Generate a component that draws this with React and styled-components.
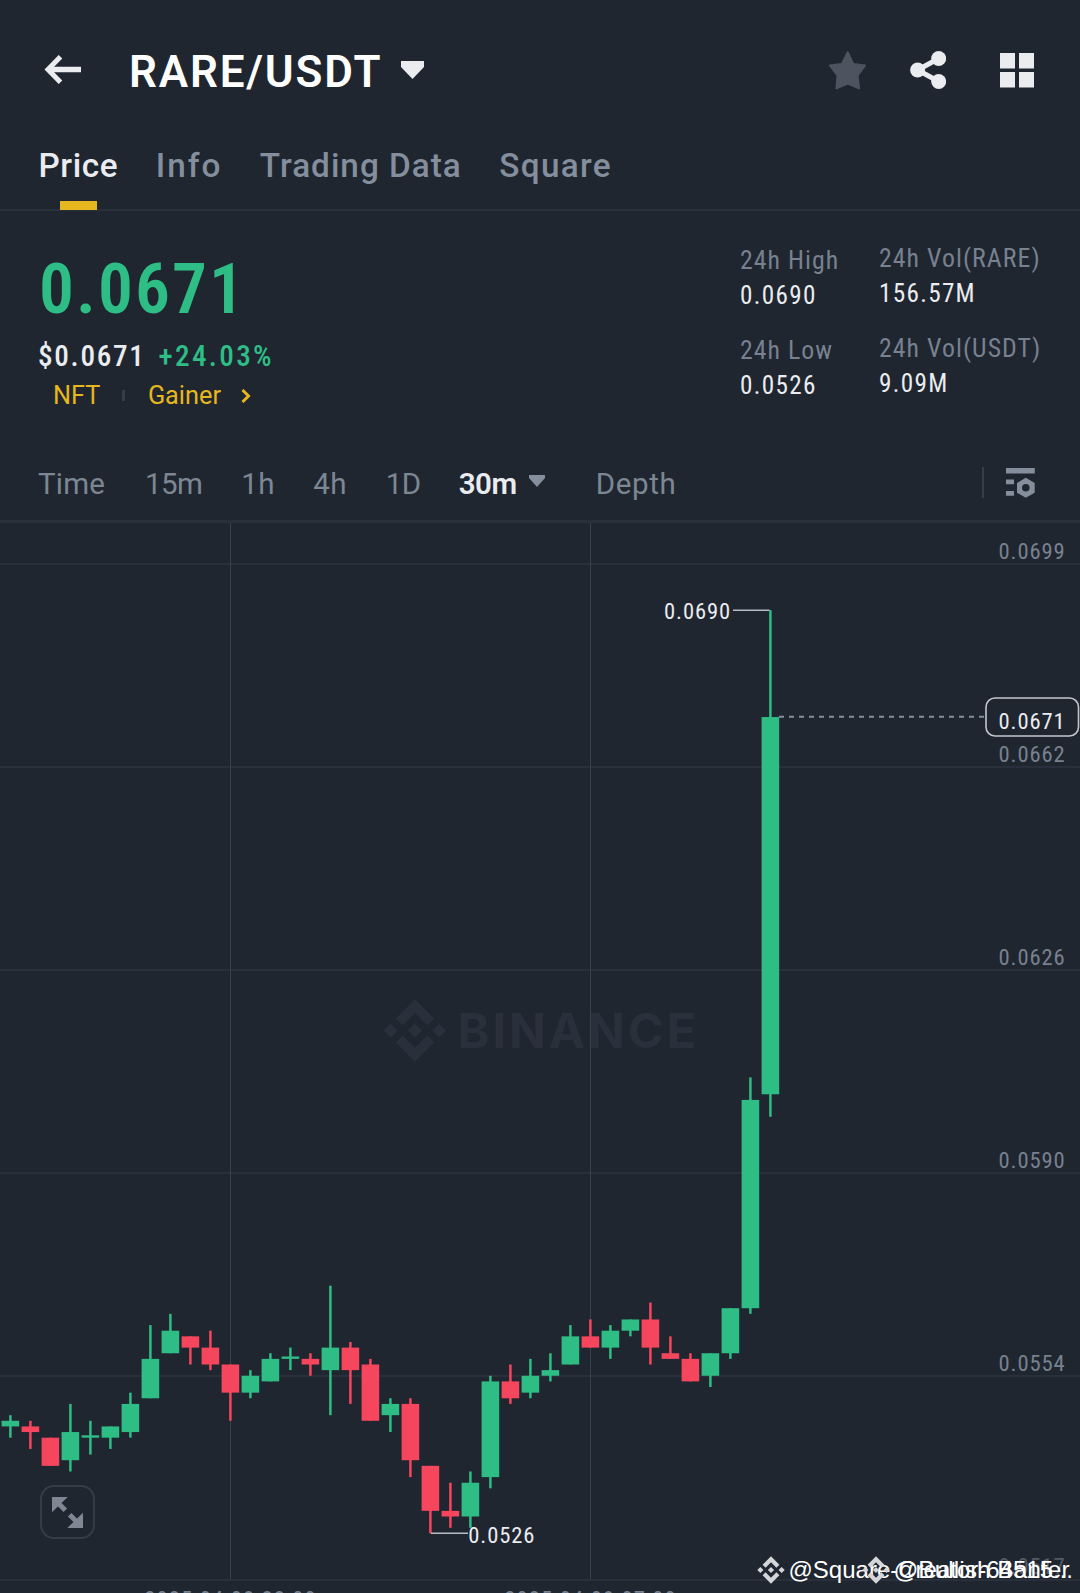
import React from "react";
import styled, { createGlobalStyle } from "styled-components";

const GlobalStyle = createGlobalStyle`
  * {
    box-sizing: border-box;
  }
  body {
    margin: 0;
    background: #1f2630;
    font-family: Roboto, "Noto Sans", sans-serif;
  }
`;

const GREEN = "#2ebd85";
const RED = "#f6465d";
const NARROW = '"Roboto Condensed", Roboto, sans-serif';

const Page = styled.div`
  width: 1080px;
  height: 1593px;
  overflow: hidden;
  position: relative;
  background: #1f2630;
  color: #eaecef;
  white-space: nowrap;
`;

const Header = styled.header`
  display: flex;
  align-items: center;
  height: 140px;
  padding: 0 46px 0 44px;

  > svg {
    margin-bottom: 1px;
  }
`;

const Pair = styled.h1`
  margin: 3px 19px 0 48px;
  font-size: 44px;
  line-height: 56px;
  font-weight: 600;
  letter-spacing: 1.8px;
  color: #fff;
`;

const Actions = styled.div`
  display: flex;
  align-items: center;
  margin-left: auto;

  svg + svg {
    margin-left: 44px;
  }
  svg:last-child {
    margin-left: 54px;
  }
`;

const Tabs = styled.nav`
  display: flex;
  gap: 37.5px;
  height: 71px;
  padding-left: 38.5px;
  border-bottom: 2px solid #29303b;
`;

const Tab = styled.div`
  display: flex;
  flex-direction: column;
  align-items: center;
  font-size: 33.3px;
  line-height: 51px;
  font-weight: 500;
  letter-spacing: ${(props) => props.$tracking || 0}px;
  color: ${(props) => (props.$active ? "#eaecef" : "#848e9c")};
`;

const Underline = styled.div`
  flex: none;
  width: 37px;
  height: 9px;
  margin-top: 10px;
  background: #e6b71e;
`;

const Summary = styled.section`
  display: flex;
  justify-content: space-between;
  height: 234px;
  padding: 32px 0 0 38px;
`;

const Quote = styled.div`
  padding-top: 11px;
`;

const LastPrice = styled.div`
  padding-left: 1px;
  font-family: ${NARROW};
  font-size: 69.5px;
  line-height: 72px;
  font-weight: 600;
  letter-spacing: 2.1px;
  color: ${GREEN};
`;

const Change = styled.div`
  display: flex;
  gap: 13px;
  margin-top: 12px;
  font-family: ${NARROW};
  font-size: 29.2px;
  line-height: 36px;
  font-weight: 500;
  letter-spacing: 1.7px;
`;

const Percent = styled.span`
  letter-spacing: 2.3px;
  color: ${GREEN};
`;

const Tags = styled.div`
  display: flex;
  align-items: center;
  margin-top: 6.5px;
  padding-left: 15px;
  font-size: 25.3px;
  line-height: 30px;
  color: #e6b71e;

  svg {
    margin-left: 20.5px;
  }
`;

const TagDivider = styled.span`
  width: 3px;
  height: 11px;
  margin: 0 22.5px 0 22px;
  background: #363d48;
`;

const Stats = styled.div`
  display: flex;
`;

const StatColumn = styled.div`
  display: flex;
  flex-direction: column;
  gap: 20px;
  width: ${(props) => props.$width}px;
  margin-top: ${(props) => props.$lift || 0}px;
`;

const StatLabel = styled.div`
  font-family: ${NARROW};
  font-size: 25.8px;
  line-height: 35px;
  letter-spacing: 1.05px;
  color: #78818f;
`;

const StatValue = styled.div`
  font-family: ${NARROW};
  font-size: 25.2px;
  line-height: 35px;
  letter-spacing: 1.3px;
`;

const Intervals = styled.nav`
  display: flex;
  align-items: center;
  height: 78px;
  padding: 0 45px 0 38px;
  border-bottom: 3px solid #29303b;
`;

const Interval = styled.div`
  display: flex;
  align-items: center;
  margin-right: ${(props) => props.$after || 39}px;
  padding-top: 3px;
  font-size: 29.5px;
  line-height: 40px;
  font-weight: ${(props) => (props.$active ? 600 : 400)};
  letter-spacing: ${(props) => props.$tracking || 0}px;
  color: ${(props) => (props.$active ? "#eaecef" : "#7d8693")};

  svg {
    margin-left: 12px;
    margin-bottom: 6px;
  }
`;

const ChartTools = styled.div`
  display: flex;
  align-items: center;
  gap: 22px;
  margin-left: auto;
`;

const ToolDivider = styled.span`
  width: 2.5px;
  height: 31px;
  background: #363d48;
`;

const ChartArea = styled.section`
  position: relative;
  height: 1070px;
  overflow: hidden;

  > svg {
    display: block;
  }
`;

const ExpandButton = styled.button`
  position: absolute;
  left: 40px;
  top: 962px;
  width: 55px;
  height: 54px;
  display: flex;
  align-items: center;
  justify-content: center;
  padding: 0;
  border: 2px solid #363c47;
  border-radius: 14px;
  background: transparent;
`;

const Credit = styled.div`
  position: absolute;
  left: ${(props) => props.$left}px;
  top: 1555px;
  display: flex;
  align-items: center;
  gap: 3.5px;
  font-family: "Liberation Sans", Arial, sans-serif;
  font-size: ${(props) => props.$size}px;
  line-height: 28px;
  color: #fff;

  span {
    padding-top: 1px;
  }
`;

const ARROW_UP =
  "M0-31.3 19.2-12 12.3-5.1 0-17.5-12.3-5.1-19.2-12Z";
const ARROW_DOWN = "M0 31.3 19.2 12 12.3 5.1 0 17.5-12.3 5.1-19.2 12Z";

const LogoShape = () => (
  <>
    <path d={ARROW_UP} />
    <path d={ARROW_DOWN} />
    <path d="M0-7 7 0 0 7-7 0Z" />
    <path d="M-24.3-7-17.3 0-24.3 7-31.3 0Z" />
    <path d="M24.3-7 31.3 0 24.3 7 17.3 0Z" />
  </>
);

const CreditLogo = () => (
  <svg width="28" height="28" viewBox="-32 -32 64 64" fill="#d3d5d9">
    <LogoShape />
  </svg>
);

const BackIcon = () => (
  <svg width="37" height="29" viewBox="0 0 37 29" fill="none" stroke="#eaecef">
    <path d="M37 14.5H4" strokeWidth="5.4" />
    <path d="M16.5 1.7 4 14.5l12.5 12.8" strokeWidth="5" />
  </svg>
);

const StarIcon = () => (
  <svg width="37" height="39" viewBox="0 0 37 39">
    <path
      d="M18.7 1.3 24.2 13 36 14.5 28.6 24.7 30 37.3 18.7 32.6 7.4 37.3 8.6 24.7 1 14.5 13 13Z"
      fill="#4d545f"
      stroke="#4d545f"
      strokeWidth="2"
      strokeLinejoin="round"
    />
  </svg>
);

const ShareIcon = () => (
  <svg width="36.5" height="38" viewBox="0 0 36.5 38" fill="#eaecef">
    <path d="M28.7 7.5 7.6 19l21.1 11.5" fill="none" stroke="#eaecef" strokeWidth="5" />
    <circle cx="28.7" cy="7.5" r="7.5" />
    <circle cx="7.6" cy="19" r="7.5" />
    <circle cx="28.7" cy="30.5" r="7.5" />
  </svg>
);

const GridIcon = () => (
  <svg width="34" height="35" viewBox="0 0 34 35" fill="#eaecef">
    <path d="M0 0h15v15.5H0zM19 0h15v15.5H19zM0 19h15v15.5H0zM19 19h15v15.5H19z" />
  </svg>
);

const SettingsIcon = () => (
  <svg width="29" height="30" viewBox="0 0 29 30" fill="#848e9c">
    <path d="M0 0h28.8v5.5H0zM0 11.5h8v4.7H0zM0 23h8v4.7H0z" />
    <path
      fillRule="evenodd"
      d="M19.8 9.8 28.7 14.9v9.8L19.8 29.8 11 24.7V14.9ZM19.8 16a3.8 3.8 0 1 0 0 7.6 3.8 3.8 0 0 0 0-7.6Z"
    />
  </svg>
);

const ExpandIcon = () => (
  <svg width="31" height="31" viewBox="0 0 31 31" fill="#7f8794">
    <path d="M0 0H15.7L0 15.3ZM31 31H15.3L31 15.7Z" />
    <path d="M4 4 13.3 13.3M27 27 17.7 17.7" stroke="#7f8794" strokeWidth="5" />
  </svg>
);

const CANDLE_STEP = 20;
const CANDLE_WIDTH = 17.6;

// [open, high, low, close], in 1/10000 USDT
const candles = [
  [545, 547, 543, 546],
  [545, 546, 541, 544],
  [543, 543, 538, 538],
  [539, 549, 537, 544],
  [543, 546, 540, 543],
  [543, 545, 541, 545],
  [544, 551, 543, 549],
  [550, 563, 550, 557],
  [558, 565, 558, 562],
  [561, 561, 556, 559],
  [559, 562, 555, 556],
  [556, 556, 546, 551],
  [551, 555, 550, 554],
  [553, 558, 553, 557],
  [557, 559, 555, 557],
  [557, 558, 554, 556],
  [555, 570, 547, 559],
  [559, 560, 549, 555],
  [556, 557, 546, 546],
  [547, 550, 544, 549],
  [549, 550, 536, 539],
  [538, 538, 526, 530],
  [530, 535, 527, 529],
  [529, 537, 527, 535],
  [536, 554, 534, 553],
  [553, 556, 549, 550],
  [551, 557, 550, 554],
  [554, 558, 553, 555],
  [556, 563, 556, 561],
  [561, 564, 559, 559],
  [559, 563, 557, 562],
  [562, 564, 561, 564],
  [564, 567, 556, 559],
  [558, 561, 557, 557],
  [557, 558, 553, 553],
  [554, 558, 552, 558],
  [558, 566, 557, 566],
  [566, 607, 565, 603],
  [604, 690, 600, 671],
];

const gridLines = ["0.0699", "0.0662", "0.0626", "0.0590", "0.0554", "0.0517"];
const timeLines = [
  { x: 230.5, label: "2025-04-08 22:00" },
  { x: 590.5, label: "2025-04-09 07:00" },
];

const priceY = (price) => 1010.4 - (price - 526) * 5.63;
const gridY = (index) => 41 + index * 203.1;

const Candle = ({ index, values: [open, high, low, close] }) => {
  const center = 10.4 + index * CANDLE_STEP;
  const color = close >= open ? GREEN : RED;
  const bottom = priceY(Math.min(open, close));
  const top = Math.min(priceY(Math.max(open, close)), bottom - 2.4);
  return (
    <g fill={color}>
      <rect x={center - 1.25} y={priceY(high)} width="2.5" height={priceY(low) - priceY(high)} />
      <rect x={center - CANDLE_WIDTH / 2} y={top} width={CANDLE_WIDTH} height={bottom - top} />
    </g>
  );
};

const Chart = () => (
  <svg width="1080" height="1070" fontFamily={NARROW} fontSize="22.6" letterSpacing="0.9">
    <g fill="#2a303b">
      <g transform="translate(415 507.5)">
        <LogoShape />
      </g>
      <text x="457.5" y="525" fontFamily="Inter, sans-serif" fontWeight="700" fontSize="48.5" letterSpacing="2.9">
        BINANCE
      </text>
    </g>
    {gridLines.map((label, index) => (
      <rect key={label} x="0" y={Math.round(gridY(index)) - 1} width="1080" height="2" fill="#29303b" />
    ))}
    {timeLines.map(({ x, label }) => (
      <g key={label}>
        <rect x={x - 0.5} y="0" width="1" height="1056" fill="#3a414c" />
        <text x={x} y="1084" textAnchor="middle" letterSpacing="1.05" fill="#78818f">
          {label}
        </text>
      </g>
    ))}
    {gridLines.map((label, index) => (
      <text key={label} x="998.5" y={gridY(index) - 5.2} fill={index === 5 ? "#525a67" : "#78818f"}>
        {label}
      </text>
    ))}
    {candles.map((values, index) => (
      <Candle key={index} index={index} values={values} />
    ))}
    <g stroke="#b7bdc6" strokeWidth="1.5">
      <path d="M733 87.2H769.5M431 1010.2H468" />
      <path d="M779 193.8H984" stroke="#848e9c" strokeWidth="2" strokeDasharray="5 5" />
    </g>
    <g fill="#eaecef">
      <text x="664" y="95.8">0.0690</text>
      <text x="468.3" y="1019.7">0.0526</text>
    </g>
    <rect x="986" y="175" width="92.5" height="38" rx="9" fill="#1f2630" stroke="#c3c7cd" strokeWidth="1.6" />
    <text x="998.5" y="205.7" fill="#eaecef">
      0.0671
    </text>
  </svg>
);

const Stat = ({ label, value }) => (
  <div>
    <StatLabel>{label}</StatLabel>
    <StatValue>{value}</StatValue>
  </div>
);

export default () => {
  return (
    <Page>
      <GlobalStyle />
      <Header>
        <BackIcon />
        <Pair>RARE/USDT</Pair>
        <svg width="23" height="18" viewBox="0 0 23 18" fill="#eaecef">
          <path d="M0 0H23V6L11.5 18 0 6Z" />
        </svg>
        <Actions>
          <StarIcon />
          <ShareIcon />
          <GridIcon />
        </Actions>
      </Header>
      <Tabs>
        <Tab $active $tracking={0.6}>
          Price
          <Underline />
        </Tab>
        <Tab $tracking={2}>Info</Tab>
        <Tab $tracking={1}>Trading Data</Tab>
        <Tab $tracking={1.3}>Square</Tab>
      </Tabs>
      <Summary>
        <Quote>
          <LastPrice>0.0671</LastPrice>
          <Change>
            <span>$0.0671</span>
            <Percent>+24.03%</Percent>
          </Change>
          <Tags>
            <span>NFT</span>
            <TagDivider />
            <span>Gainer</span>
            <svg width="10" height="14" viewBox="0 0 10 14" fill="none" stroke="#e6b71e" strokeWidth="3">
              <path d="M1.5 1 7.5 7l-6 6" />
            </svg>
          </Tags>
        </Quote>
        <Stats>
          <StatColumn $width={139}>
            <Stat label="24h High" value="0.0690" />
            <Stat label="24h Low" value="0.0526" />
          </StatColumn>
          <StatColumn $width={201} $lift={-2}>
            <Stat label="24h Vol(RARE)" value="156.57M" />
            <Stat label="24h Vol(USDT)" value="9.09M" />
          </StatColumn>
        </Stats>
      </Summary>
      <Intervals>
        <Interval $tracking={0.2} $after={40}>Time</Interval>
        <Interval $tracking={-0.6}>15m</Interval>
        <Interval $tracking={0.3} $after={38.5}>1h</Interval>
        <Interval $tracking={0.3}>4h</Interval>
        <Interval $tracking={-0.5} $after={38}>1D</Interval>
        <Interval $active $tracking={-0.4} $after={51}>
          30m
          <svg width="16" height="12" viewBox="0 0 16 12" fill="#848e9c">
            <path d="M0 0H16V3L8 12 0 3Z" />
          </svg>
        </Interval>
        <Interval $tracking={0.6}>Depth</Interval>
        <ChartTools>
          <ToolDivider />
          <SettingsIcon />
        </ChartTools>
      </Intervals>
      <ChartArea>
        <Chart />
        <ExpandButton aria-label="Expand chart">
          <ExpandIcon />
        </ExpandButton>
      </ChartArea>
      <Credit $left={757} $size={24}>
        <CreditLogo />
        <span>@Square-Creator-64515...</span>
      </Credit>
      <Credit $left={862} $size={24.5}>
        <CreditLogo />
        <span>@Bullish Banter</span>
      </Credit>
    </Page>
  );
};
